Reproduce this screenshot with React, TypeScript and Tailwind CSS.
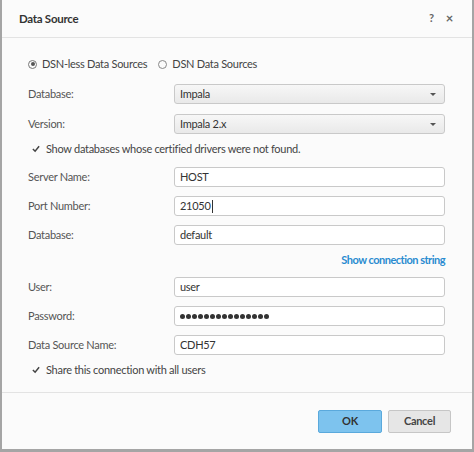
const font = { fontFamily: 'Lato, "Noto Sans", sans-serif' };

function Select({ value }: { value: string }) {
  return (
    <div className="flex h-[20px] items-center justify-between rounded-[3px] border border-[#c9c9c9] bg-gradient-to-b from-[#f7f7f7] to-[#e9e9e9] pl-[5px] pr-[8px] text-[#333]">
      <span>{value}</span>
      <span className="h-0 w-0 border-x-[3px] border-t-[3px] border-x-transparent border-t-[#555]" />
    </div>
  );
}

function Input({ value, caret }: { value: string; caret?: boolean }) {
  return (
    <div className="flex h-[20px] items-center rounded-[3px] border border-[#c9c9c9] bg-white pl-[5px] text-[#333]">
      <span>{value}</span>
      {caret && <span className="ml-px h-[13px] w-px bg-[#333]" />}
    </div>
  );
}

function Row({ label, children }: { label: string; children: React.ReactNode }) {
  return (
    <div className="grid grid-cols-[146px_271px] items-center">
      <span className="text-[#555]">{label}</span>
      {children}
    </div>
  );
}

function Check({ label }: { label: string }) {
  return (
    <div className="flex items-center pl-[4px] text-[#444]">
      <svg width="8" height="8" viewBox="0 0 9 9" className="mr-[6px]">
        <path d="M1 4.5 L3.5 7 L8 1.5" stroke="#444" strokeWidth="1.7" fill="none" />
      </svg>
      <span>{label}</span>
    </div>
  );
}

export default function App() {
  return (
    <div style={font} className="h-[452px] w-[474px] bg-[#dcdcdc] text-[11px] tracking-[-0.28px]">
      <div className="flex h-[452px] w-[474px] flex-col border-x-2 border-b-[3px] border-[#a5a5a5] bg-[#fbfbfb]">
        <div className="flex h-[38px] items-center justify-between border-b border-[#e3e3e3] pl-[17px] pr-[19px]">
          <span className="text-[11.5px] font-bold text-[#333]">Data Source</span>
          <div className="flex items-center gap-[12px] text-[11px] font-bold text-[#666]">
            <span>?</span>
            <span className="text-[13px]">×</span>
          </div>
        </div>

        <div className="flex flex-col pl-[26px]">
          <div className="mt-[18px] flex h-[16px] items-center text-[#444]">
            <span className="flex h-[9px] w-[9px] items-center justify-center rounded-full border border-[#777]">
              <span className="h-[4px] w-[4px] rounded-full bg-[#555]" />
            </span>
            <span className="ml-[5px]">DSN-less Data Sources</span>
            <span className="ml-[11px] h-[9px] w-[9px] rounded-full border border-[#888]" />
            <span className="ml-[5px]">DSN Data Sources</span>
          </div>

          <div className="mt-[12px] flex flex-col gap-[10px]">
            <Row label="Database:"><Select value="Impala" /></Row>
            <Row label="Version:"><Select value="Impala 2.x" /></Row>
          </div>

          <div className="mt-[7px] h-[16px]">
            <Check label="Show databases whose certified drivers were not found." />
          </div>

          <div className="mt-[10px] flex flex-col gap-[9px]">
            <Row label="Server Name:"><Input value="HOST" /></Row>
            <Row label="Port Number:"><Input value="21050" caret /></Row>
            <Row label="Database:"><Input value="default" /></Row>
          </div>

          <div className="mt-[7px] flex h-[16px] w-[417px] items-center justify-end font-bold tracking-[-0.5px] text-[#2a8bd0]">
            Show connection string
          </div>

          <div className="mt-[9px] flex flex-col gap-[9px]">
            <Row label="User:"><Input value="user" /></Row>
            <Row label="Password:">
              <div className="flex h-[20px] items-center gap-px rounded-[3px] border border-[#c9c9c9] bg-white pl-[5px]">
                {Array.from({ length: 15 }).map((_, i) => (
                  <span key={i} className="h-[5px] w-[5px] rounded-full bg-[#333]" />
                ))}
              </div>
            </Row>
            <Row label="Data Source Name:"><Input value="CDH57" /></Row>
          </div>

          <div className="mt-[7px] h-[16px]">
            <Check label="Share this connection with all users" />
          </div>
        </div>

        <div className="mt-[14px] border-t border-[#e3e3e3]" />

        <div className="mt-[17px] flex justify-end gap-[6px] pr-[21px]">
          <button className="h-[23px] w-[64px] rounded-[2px] border border-[#5aa9dc] bg-[#7dc3ee] text-[11px] font-bold text-[#333]">
            OK
          </button>
          <button className="h-[23px] w-[63px] rounded-[2px] border border-[#c6c6c6] bg-[#e6e6e6] text-[11px] font-bold text-[#444]">
            Cancel
          </button>
        </div>
      </div>
    </div>
  );
}
